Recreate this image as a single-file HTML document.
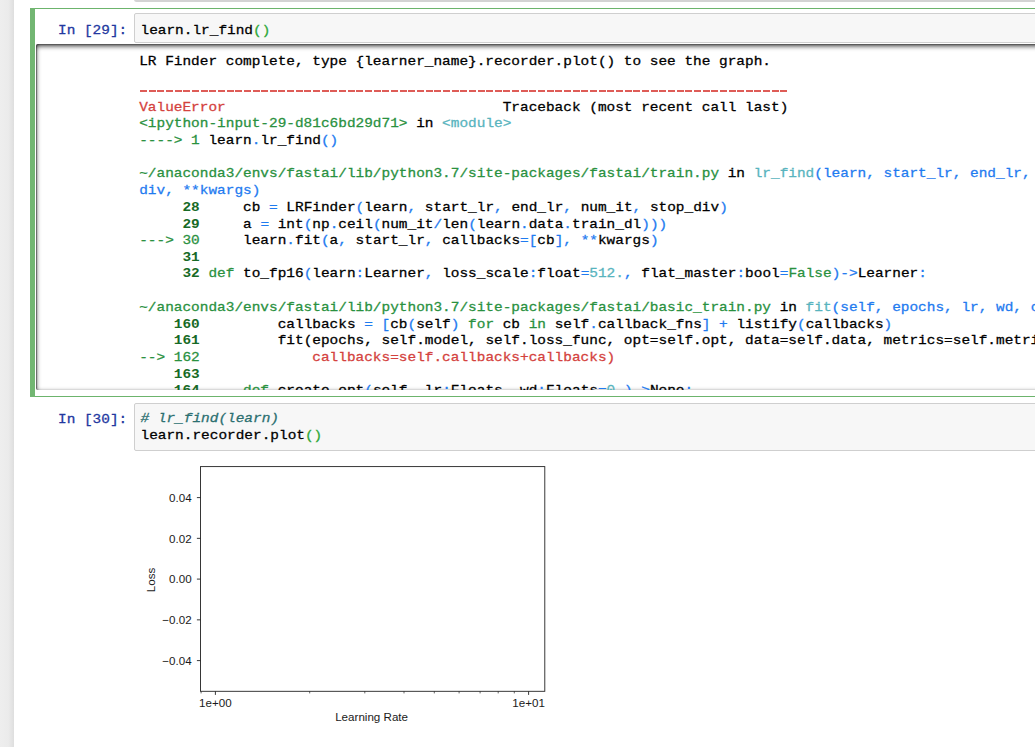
<!DOCTYPE html>
<html><head><meta charset="utf-8">
<style>
html,body{margin:0;padding:0;}
body{width:1035px;height:747px;overflow:hidden;background:#fff;position:relative;font-family:"Liberation Mono",monospace;}
.abs{position:absolute;}
#strip{left:0;top:0;width:14px;height:747px;background:linear-gradient(to right,#eeeeee 0%,#ebebeb 60%,#dedede 100%);}
.mono{font-family:"Liberation Mono",monospace;font-size:14.43px;line-height:18.556px;white-space:pre;margin:0;color:#000;-webkit-text-stroke:0.3px currentColor;transform-origin:0 0;transform:scaleY(0.9);}
.mono.prompt{color:#23389f;}
.inbox{background:#f7f7f7;border:1px solid #cfcfcf;border-radius:2px;box-sizing:border-box;}
#cell29{left:30px;top:8px;width:1100px;height:389px;border:1px solid #6cb46c;box-sizing:border-box;border-radius:2px;}
#cell29bar{left:30px;top:8px;width:5px;height:389px;background:#72b672;}
#scroll{left:36px;top:44px;width:1100px;height:345.5px;overflow:hidden;border-radius:2px;box-shadow:inset 0 2px 5px rgba(0,0,0,0.78), inset 1px 0.5px 1px rgba(0,0,0,0.4);}
.R{color:#d4423e}.G{color:#2a913f}.GB{color:#176a26;font-weight:bold;-webkit-text-stroke:0}.B{color:#1f7bf0}.C{color:#58b4be}
.cm{color:#2b6f70;font-style:italic}.br{color:#2ea83a}
</style></head><body>
<div id="strip" class="abs"></div>
<!-- previous cell input bottom -->
<div class="abs" style="left:134.3px;top:-2px;width:1000px;height:3.8px;background:#d3d3d3;border-radius:0 0 0 2.5px;"></div>

<!-- cell 29 -->
<div id="cell29" class="abs"></div>
<div id="cell29bar" class="abs"></div>
<div class="abs mono prompt" style="left:58px;top:22.085px;">In [29]:</div>
<div class="abs inbox" style="left:134.3px;top:13.1px;width:1000px;height:30.1px;"></div>
<div class="abs mono" style="left:140.5px;top:22.085px;">learn.lr_find<span class="br">()</span></div>

<div id="scroll" class="abs">
<div class="abs" style="left:103.9px;top:45.9px;width:647.5px;height:2px;background:repeating-linear-gradient(to right,#de5c57 0,#de5c57 7px,transparent 7px,transparent 8.6546px);"></div>
<div class="abs mono" style="left:103.2px;top:8.985px;">LR Finder complete, type {learner_name}.recorder.plot() to see the graph.</div>
<div class="abs mono" style="left:103.2px;top:38.285px;"><span style="color:transparent;-webkit-text-stroke:0">---------------------------------------------------------------------------</span>
<span class="R">ValueError</span>                                Traceback (most recent call last)
<span class="G">&lt;ipython-input-29-d81c6bd29d71&gt;</span> in <span class="C">&lt;module&gt;</span>
<span class="G">----&gt; 1</span> learn<span class="B">.</span>lr_find<span class="B">()</span>

<span class="G">~/anaconda3/envs/fastai/lib/python3.7/site-packages/fastai/train.py</span> in <span class="C">lr_find</span><span class="B">(learn, start_lr, end_lr, num_it, stop_</span>
<span class="B">div, **kwargs)</span>
<span class="GB">     28</span>     cb <span class="B">=</span> LRFinder<span class="B">(</span>learn<span class="B">,</span> start_lr<span class="B">,</span> end_lr<span class="B">,</span> num_it<span class="B">,</span> stop_div<span class="B">)</span>
<span class="GB">     29</span>     a <span class="B">=</span> int<span class="B">(</span>np<span class="B">.</span>ceil<span class="B">(</span>num_it<span class="B">/</span>len<span class="B">(</span>learn<span class="B">.</span>data<span class="B">.</span>train_dl<span class="B">)))</span>
<span class="G">---&gt; 30</span>     learn<span class="B">.</span>fit<span class="B">(</span>a<span class="B">,</span> start_lr<span class="B">,</span> callbacks<span class="B">=[</span>cb<span class="B">],</span> <span class="B">**</span>kwargs<span class="B">)</span>
<span class="GB">     31</span>
<span class="GB">     32</span> <span class="G">def</span> to_fp16<span class="B">(</span>learn<span class="B">:</span>Learner<span class="B">,</span> loss_scale<span class="B">:</span>float<span class="B">=</span><span class="C">512.</span><span class="B">,</span> flat_master<span class="B">:</span>bool<span class="B">=</span><span class="G">False</span><span class="B">)-&gt;</span>Learner<span class="B">:</span>

<span class="G">~/anaconda3/envs/fastai/lib/python3.7/site-packages/fastai/basic_train.py</span> in <span class="C">fit</span><span class="B">(self, epochs, lr, wd, callbacks)</span>
<span class="GB">    160</span>         callbacks <span class="B">=</span> <span class="B">[</span>cb<span class="B">(</span>self<span class="B">)</span> <span class="G">for</span> cb <span class="G">in</span> self<span class="B">.</span>callback_fns<span class="B">]</span> <span class="B">+</span> listify<span class="B">(</span>callbacks<span class="B">)</span>
<span class="GB">    161</span>         fit(epochs, self.model, self.loss_func, opt=self.opt, data=self.data, metrics=self.metrics,
<span class="G">--&gt; 162</span> <span class="R">            callbacks=self.callbacks+callbacks)</span>
<span class="GB">    163</span>
<span class="GB">    164</span>     <span class="G">def</span> create_opt<span class="B">(</span>self<span class="B">,</span> lr<span class="B">:</span>Floats<span class="B">,</span> wd<span class="B">:</span>Floats<span class="B">=</span><span class="C">0.</span><span class="B">)-&gt;</span>None<span class="B">:</span>
</div>
</div>

<!-- cell 30 -->
<div class="abs mono prompt" style="left:58px;top:410.885px;">In [30]:</div>
<div class="abs inbox" style="left:134.3px;top:403.3px;width:1000px;height:47.3px;"></div>
<div class="abs mono" style="left:140.5px;top:410.4px;"><span class="cm"># lr_find(learn)</span>
learn.recorder.plot<span class="br">()</span></div>

<!-- plot -->
<svg class="abs" style="left:0;top:0" width="1035" height="747" viewBox="0 0 1035 747" font-family="Liberation Sans, sans-serif" font-size="11.6" fill="#1a1a1a">
<rect x="200.5" y="466.6" width="344.29999999999995" height="224.69999999999993" fill="none" stroke="#222" stroke-width="0.9"/>
<line x1="196.9" y1="497.6" x2="200.5" y2="497.6" stroke="#222" stroke-width="0.9"/>
<text x="191.6" y="501.7" text-anchor="end">0.04</text>
<line x1="196.9" y1="538.35" x2="200.5" y2="538.35" stroke="#222" stroke-width="0.9"/>
<text x="191.6" y="542.5" text-anchor="end">0.02</text>
<line x1="196.9" y1="579.1" x2="200.5" y2="579.1" stroke="#222" stroke-width="0.9"/>
<text x="191.6" y="583.2" text-anchor="end">0.00</text>
<line x1="196.9" y1="619.85" x2="200.5" y2="619.85" stroke="#222" stroke-width="0.9"/>
<text x="191.6" y="624.0" text-anchor="end">−0.02</text>
<line x1="196.9" y1="660.6" x2="200.5" y2="660.6" stroke="#222" stroke-width="0.9"/>
<text x="191.6" y="664.7" text-anchor="end">−0.04</text>
<line x1="215.4" y1="691.3" x2="215.4" y2="694.9" stroke="#222" stroke-width="0.9"/>
<line x1="528.6" y1="691.3" x2="528.6" y2="694.9" stroke="#222" stroke-width="0.9"/>
<line x1="201.1" y1="691.3" x2="201.1" y2="693.4" stroke="#222" stroke-width="0.7"/>
<line x1="309.7" y1="691.3" x2="309.7" y2="693.4" stroke="#222" stroke-width="0.7"/>
<line x1="364.8" y1="691.3" x2="364.8" y2="693.4" stroke="#222" stroke-width="0.7"/>
<line x1="404.0" y1="691.3" x2="404.0" y2="693.4" stroke="#222" stroke-width="0.7"/>
<line x1="434.3" y1="691.3" x2="434.3" y2="693.4" stroke="#222" stroke-width="0.7"/>
<line x1="459.1" y1="691.3" x2="459.1" y2="693.4" stroke="#222" stroke-width="0.7"/>
<line x1="480.1" y1="691.3" x2="480.1" y2="693.4" stroke="#222" stroke-width="0.7"/>
<line x1="498.2" y1="691.3" x2="498.2" y2="693.4" stroke="#222" stroke-width="0.7"/>
<line x1="514.3" y1="691.3" x2="514.3" y2="693.4" stroke="#222" stroke-width="0.7"/>
<text x="215.4" y="707.3" text-anchor="middle">1e+00</text>
<text x="528.6" y="707.3" text-anchor="middle">1e+01</text>
<text x="371.6" y="721.1" text-anchor="middle">Learning Rate</text>
<text transform="translate(154.8,579.9) rotate(-90)" text-anchor="middle">Loss</text>
</svg>
</body></html>
